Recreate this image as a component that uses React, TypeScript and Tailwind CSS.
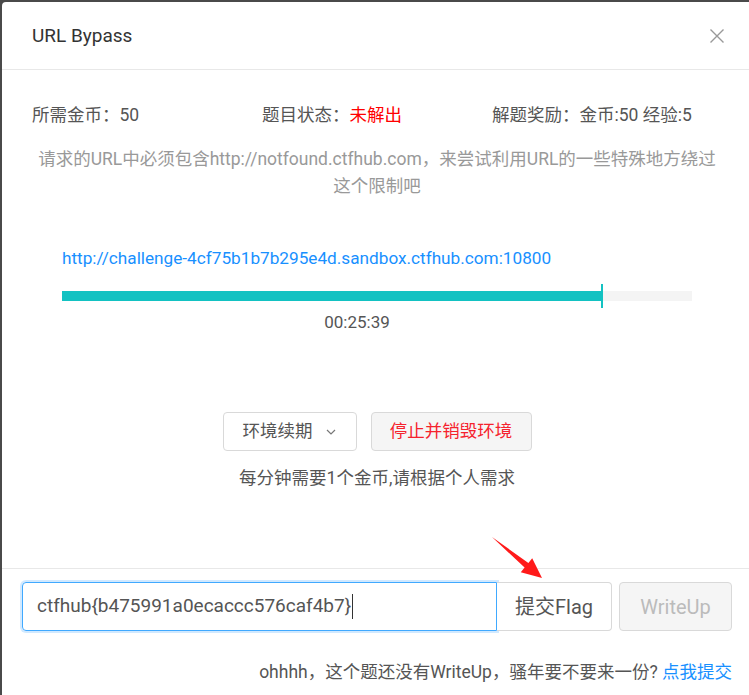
import React from "react";

export default function App() {
  return (
    <div className="w-[749px] h-[695px] bg-[#4a4a4a] pt-[2px] pl-[2px] font-['Roboto','Noto_Sans_CJK_SC',sans-serif] overflow-hidden">
      <div className="relative w-full h-full bg-white rounded-tl-[4px] flex flex-col">
        {/* header */}
        <div className="h-[68px] flex items-center justify-between pl-[30px] pr-[24px] border-b border-[#e8e8e8]">
          <div className="text-[19px] leading-[24px] text-[#333]">URL Bypass</div>
          <svg width="16" height="16" viewBox="0 0 16 16" className="text-[#999]">
            <path d="M1.5 1.5 L14.5 14.5 M14.5 1.5 L1.5 14.5" stroke="currentColor" strokeWidth="1.4" fill="none" />
          </svg>
        </div>

        {/* body */}
        <div className="flex-1 flex flex-col pl-[30px] pr-[27px]">
          <div className="mt-[33px] grid grid-cols-3 text-[17.5px] leading-[24px] text-[#555]">
            <div>所需金币：50</div>
            <div>
              题目状态：<span className="text-[#ff0000]">未解出</span>
            </div>
            <div>解题奖励：金币:50 经验:5</div>
          </div>
          <div className="mt-[19px] text-center text-[17.5px] leading-[27px] text-[#999]">
            <div className="whitespace-nowrap">请求的URL中必须包含http://notfound.ctfhub.com，来尝试利用URL的一些特殊地方绕过</div>
            <div>这个限制吧</div>
          </div>

          <div className="mt-[46px] pl-[30px] pr-[30px]">
            <div className="text-[17.2px] leading-[24px] text-[#1890ff]">
              http://challenge-4cf75b1b7b295e4d.sandbox.ctfhub.com:10800
            </div>
            <div className="relative mt-[21px] h-[10px] bg-[#f4f4f4]">
              <div className="h-full bg-[#13c2c2]" style={{ width: "85.56%" }} />
              <div className="absolute top-[-7px] h-[24px] w-[2px] bg-[#13c2c2]" style={{ left: "85.56%" }} />
            </div>
            <div className="mt-[9px] pr-[40px] text-center text-[17px] leading-[24px] text-[#555]">00:25:39</div>
          </div>

          <div className="mt-[78px] flex justify-center gap-[14px]">
            <button className="h-[39px] w-[134px] flex items-center pl-[19px] gap-[13px] rounded-[4px] border border-[#d9d9d9] bg-white text-[17.5px] text-[#555]">
              <span>环境续期</span>
              <svg width="10" height="10" viewBox="0 0 10 10">
                <path d="M1 3 L5 7 L9 3" stroke="#777" strokeWidth="1.2" fill="none" />
              </svg>
            </button>
            <button className="h-[39px] w-[161px] flex items-center justify-center rounded-[4px] border border-[#d9d9d9] bg-[#f5f5f5] text-[17.5px] text-[#f5222d]">
              停止并销毁环境
            </button>
          </div>
          <div className="mt-[15px] text-center text-[17.5px] leading-[24px] text-[#555]">
            每分钟需要1个金币,请根据个人需求
          </div>
        </div>

        {/* footer */}
        <div className="h-[127px] border-t border-[#e8e8e8] pl-[20px] pr-[17px] pt-[13px]">
          <div className="flex items-stretch h-[49px]">
            <div className="w-[475px] rounded-l-[4px] border border-[#40a9ff] shadow-[0_0_0_2px_rgba(24,144,255,0.2)] flex items-center pl-[14px] text-[19px] text-[#555]">
              <span>ctfhub{"{"}b475991a0ecaccc576caf4b7{"}"}</span>
              <span className="ml-[1px] w-[1px] h-[25px] bg-[#333]" />
            </div>
            <button className="w-[115px] rounded-r-[4px] border border-l-0 border-[#d9d9d9] bg-white text-[20px] text-[#555]">
              提交Flag
            </button>
            <button className="ml-[7px] w-[113px] rounded-[4px] border border-[#d9d9d9] bg-[#f5f5f5] text-[20px] text-[#bbb]">
              WriteUp
            </button>
          </div>
          <div className="mt-[29px] text-right text-[17.5px] leading-[24px] text-[#555]">
            ohhhh，这个题还没有WriteUp，骚年要不要来一份? <span className="text-[#1890ff]">点我提交</span>
          </div>
        </div>

        {/* red arrow annotation */}
        <svg className="absolute left-[486px] top-[532px]" width="60" height="50" viewBox="0 0 60 50">
          <path d="M4 3 L40.4 29 L44.2 24.3 L54 44 L32.8 38.3 L36.6 33.6 Z" fill="#ff1a1a" />
        </svg>
      </div>
    </div>
  );
}
